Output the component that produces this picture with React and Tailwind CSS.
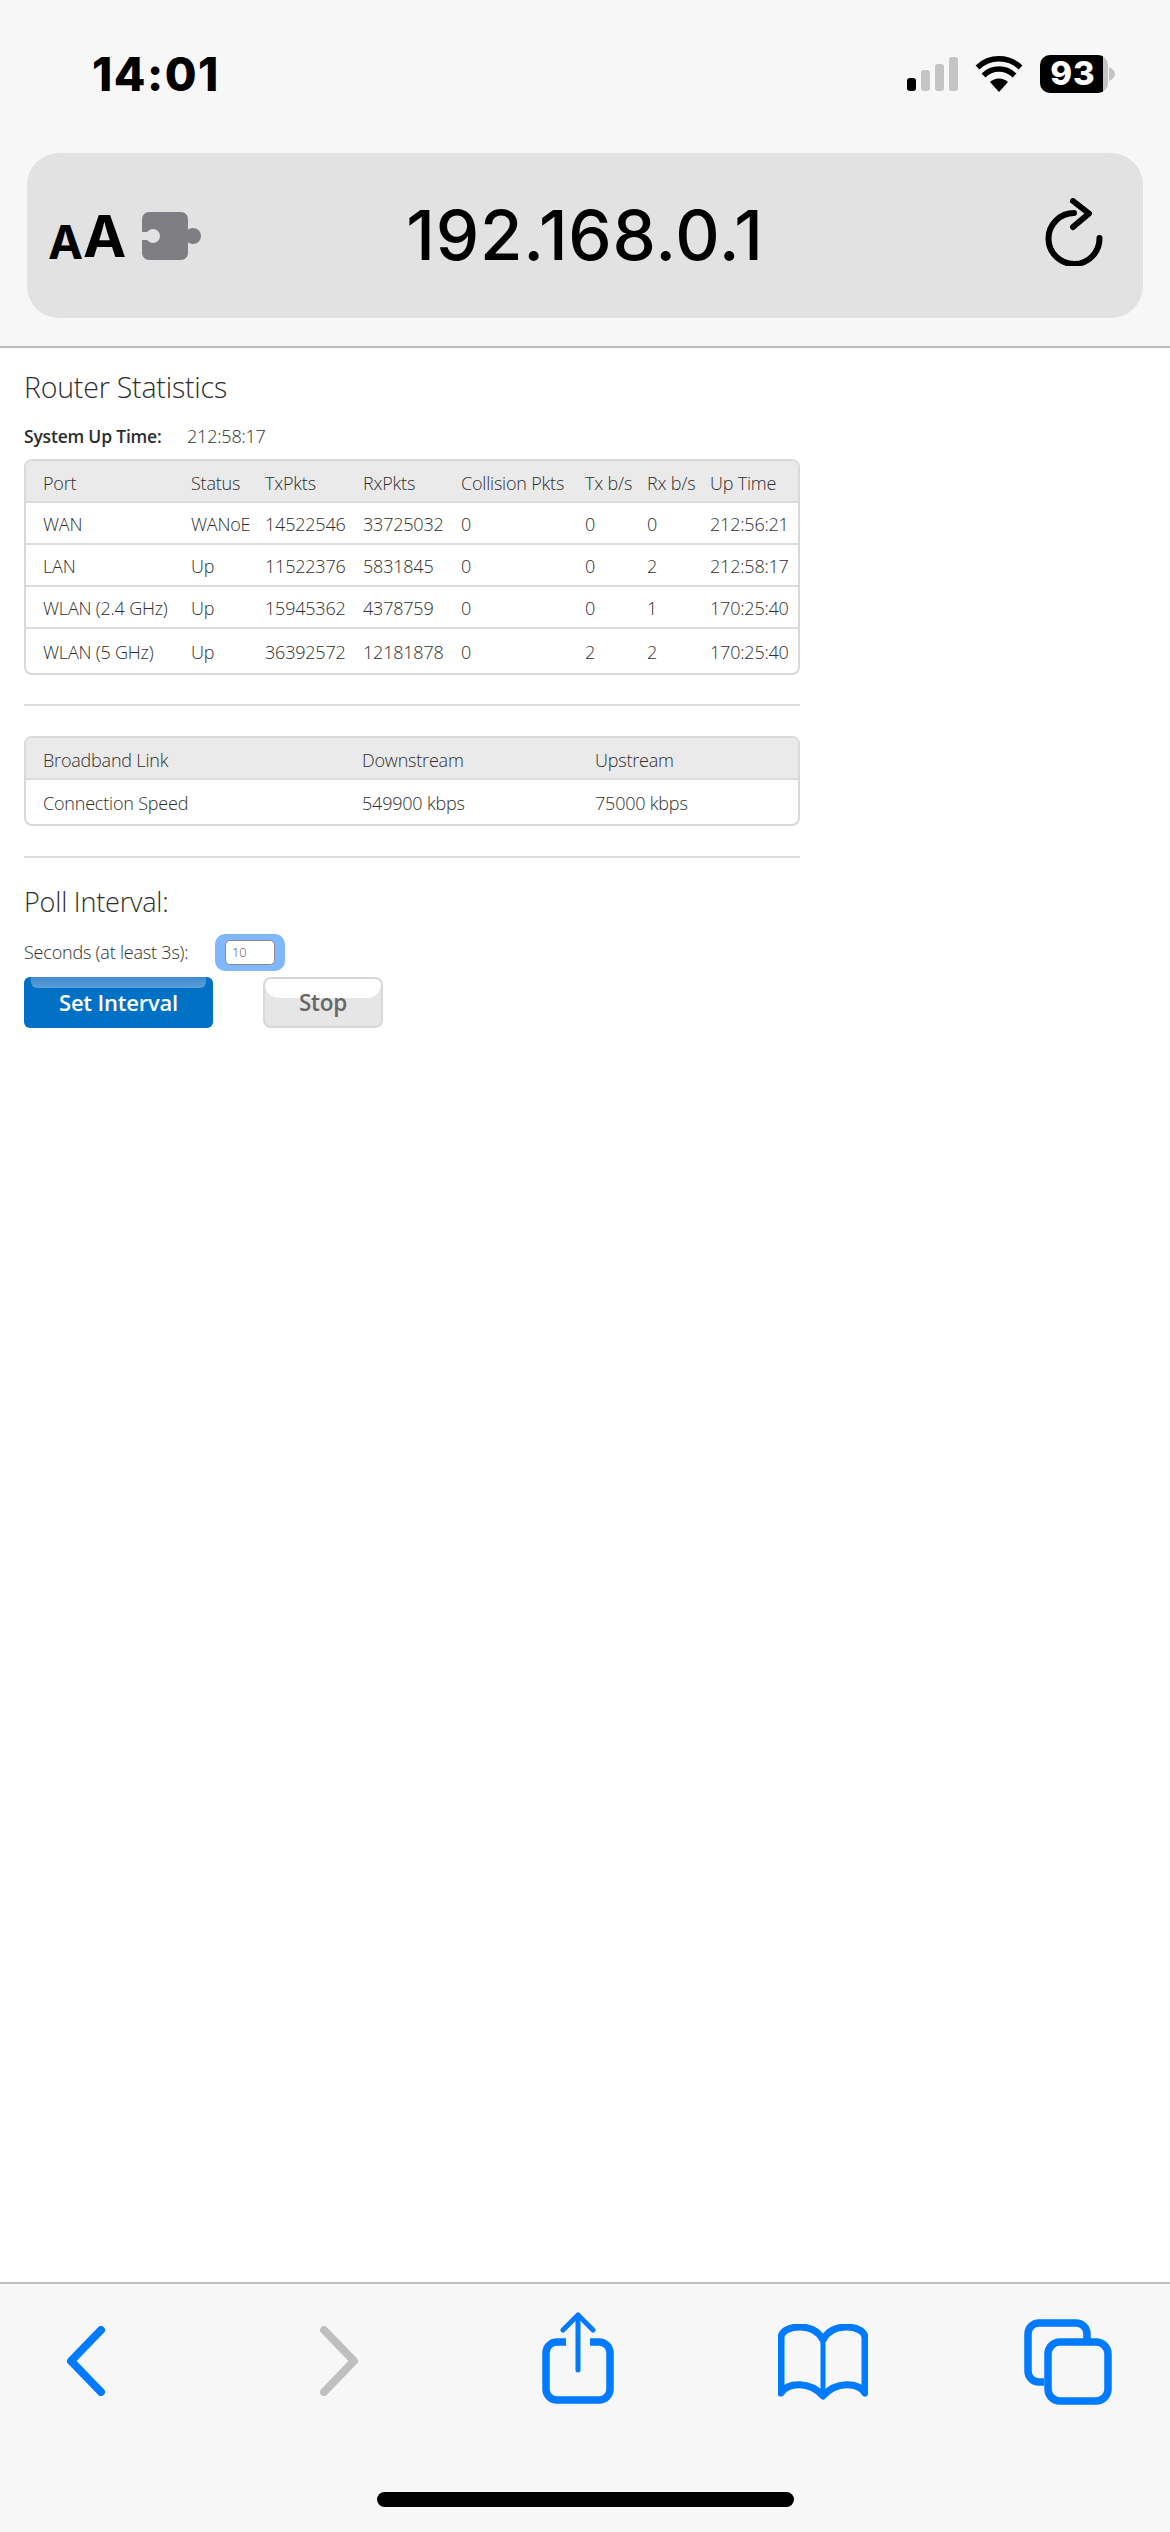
import React from 'react';

const stats = [
  ['WAN', 'WANoE', '14522546', '33725032', '0', '0', '0', '212:56:21'],
  ['LAN', 'Up', '11522376', '5831845', '0', '0', '2', '212:58:17'],
  ['WLAN (2.4 GHz)', 'Up', '15945362', '4378759', '0', '0', '1', '170:25:40'],
  ['WLAN (5 GHz)', 'Up', '36392572', '12181878', '0', '2', '2', '170:25:40'],
];
const statHeads = ['Port', 'Status', 'TxPkts', 'RxPkts', 'Collision Pkts', 'Tx b/s', 'Rx b/s', 'Up Time'];
const statWidths = ['w-[160px]', 'w-[74px]', 'w-[98px]', 'w-[98px]', 'w-[124px]', 'w-[62px]', 'w-[63px]', 'w-[97px]'];

function DataTable({ heads, rows, widths }) {
  return (
    <div className="w-[776px] overflow-hidden rounded-[8px] border-2 border-[#d9d9d9]">
      <table className="w-full table-fixed border-collapse">
        <colgroup>
          {widths.map((w, i) => <col key={i} className={w} />)}
        </colgroup>
        <thead>
          <tr className="h-[41px] bg-[#eaeaea]">
            {heads.map((h, i) => (
              <th key={h} className={`${i === 0 ? 'pl-[17px]' : 'pl-[5px]'} whitespace-nowrap border-b-2 border-[#dcdcdc] pt-[4px] text-left font-light`}>{h}</th>
            ))}
          </tr>
        </thead>
        <tbody>
          {rows.map((row, r) => {
            const last = r === rows.length - 1;
            return (
              <tr key={r} className={last ? 'h-[45px]' : 'h-[42px]'}>
                {row.map((c, i) => (
                  <td key={i} className={`${i === 0 ? 'pl-[17px]' : 'pl-[5px]'} whitespace-nowrap pt-[2px] ${last ? '' : 'border-b-2 border-[#dedede]'}`}>{c}</td>
                ))}
              </tr>
            );
          })}
        </tbody>
      </table>
    </div>
  );
}

function StatusIcons() {
  return (
    <div className="flex items-center">
      <div className="flex items-end gap-[5px]">
        <span className="h-[13px] w-[9px] rounded-[3px] bg-black" />
        <span className="h-[21px] w-[9px] rounded-[3px] bg-[#c4c4c4]" />
        <span className="h-[27px] w-[9px] rounded-[3px] bg-[#c4c4c4]" />
        <span className="h-[34px] w-[9px] rounded-[3px] bg-[#c4c4c4]" />
      </div>
      <svg className="ml-[17px]" width="48" height="36" viewBox="0 0 48 36">
        <path d="M24 36 L15 26 A13 13 0 0 1 33 26 Z" fill="#000" />
        <path d="M8.5 19.5 A22 22 0 0 1 39.5 19.5" fill="none" stroke="#000" strokeWidth="5.5" />
        <path d="M2.5 11.5 A31 31 0 0 1 45.5 11.5" fill="none" stroke="#000" strokeWidth="5.5" />
      </svg>
      <div className="relative ml-[17px] h-[38px] w-[68px] overflow-hidden rounded-[10px] bg-[#c4c4c4]">
        <div className="h-full w-[63px] bg-black" />
        <span className="absolute inset-0 flex items-center justify-center pr-[2px] font-['Inter',sans-serif] text-[33px] font-extrabold leading-none tracking-[1px] text-white">93</span>
      </div>
      <svg className="ml-[1px]" width="6" height="14" viewBox="0 0 6 14">
        <path d="M0 0 C4 2 6 4.5 6 7 C6 9.5 4 12 0 14 Z" fill="#c4c4c4" />
      </svg>
    </div>
  );
}

function Puzzle() {
  return (
    <svg width="59" height="48" viewBox="0 0 59 48">
      <rect x="0" y="0" width="46" height="48" rx="7" fill="#7f7f83" />
      <circle cx="51" cy="24" r="8" fill="#7f7f83" />
      <rect x="0" y="20" width="9" height="8" fill="#e2e2e2" />
      <circle cx="11" cy="24" r="7" fill="#e2e2e2" />
    </svg>
  );
}

function Reload() {
  return (
    <svg width="58" height="68" viewBox="0 0 58 68" fill="none" stroke="#000" strokeWidth="6" strokeLinecap="round" strokeLinejoin="round">
      <path d="M29 15 A25.5 25.5 0 1 0 54.5 40" />
      <path d="M28 3 L44 15.5 L28 29" />
    </svg>
  );
}

export default function App() {
  return (
    <div className="flex h-[2532px] w-[1170px] flex-col overflow-hidden bg-white font-['Open_Sans','Lato',sans-serif] text-[18px] font-light tracking-[-0.2px] text-[#2e2e2e]">
      <header className="h-[348px] shrink-0 border-b-2 border-[#b9b9b9] bg-[#f7f7f7] tracking-normal">
        <div className="flex h-[153px] items-center justify-between pb-[6px] pl-[92px] pr-[55px]">
          <span className="font-['Inter',sans-serif] text-[46px] font-extrabold leading-none tracking-[1.5px] text-black">14:01</span>
          <StatusIcons />
        </div>
        <div className="mx-[27px] grid h-[165px] grid-cols-[1fr_auto_1fr] items-center rounded-[32px] bg-[#e2e2e2] px-[21px]">
          <div className="flex items-center text-black">
            <div className="flex items-end font-['Inter',sans-serif] font-bold leading-none">
              <span className="text-[47px]">A</span>
              <span className="text-[58px]">A</span>
            </div>
            <div className="ml-[16px]"><Puzzle /></div>
          </div>
          <span className="font-['Inter',sans-serif] text-[69px] font-medium leading-none tracking-[0.8px] text-black">192.168.0.1</span>
          <div className="flex justify-end pb-[8px] pr-[19px]"><Reload /></div>
        </div>
      </header>

      <main className="flex-1 pl-[24px]">
        <h1 className="mt-[22px] text-[28.5px] font-light leading-[34px]">Router Statistics</h1>
        <div className="mt-[20px] flex h-[24px] items-center">
          <span className="w-[163px] text-[17.5px] font-semibold">System Up Time:</span>
          <span>212:58:17</span>
        </div>
        <div className="mt-[11px]">
          <DataTable heads={statHeads} rows={stats} widths={statWidths} />
        </div>
        <hr className="mt-[29px] w-[776px] border-t-2 border-[#dcdcdc]" />
        <div className="mt-[30px]">
          <DataTable
            heads={['Broadband Link', 'Downstream', 'Upstream']}
            rows={[['Connection Speed', '549900 kbps', '75000 kbps']]}
            widths={['w-[331px]', 'w-[233px]', 'w-[212px]']}
          />
        </div>
        <hr className="mt-[30px] w-[776px] border-t-2 border-[#dcdcdc]" />
        <h2 className="mt-[27px] text-[27px] font-light leading-[34px]">Poll Interval:</h2>
        <div className="mt-[15px] flex items-center">
          <span className="w-[191px]">Seconds (at least 3s):</span>
          <div className="rounded-[10px] bg-[#80b7ff] px-[10px] py-[6px]">
            <div className="flex h-[25px] w-[50px] items-center rounded-[5px] border border-[#8c8c8c] bg-white pl-[6px] text-[13px] leading-none text-[#555]">10</div>
          </div>
        </div>
        <div className="mt-[6px] flex">
          <button className="relative h-[51px] w-[189px] overflow-hidden rounded-[6px] bg-[#0171c5] text-[22px] font-semibold text-white">
            <span className="absolute left-[7px] right-[7px] top-0 h-[11px] rounded-b-[6px] bg-gradient-to-b from-[#3e8bd0] to-[#5c9dd8]" />
            <span className="relative">Set Interval</span>
          </button>
          <button className="relative ml-[50px] h-[51px] w-[120px] overflow-hidden rounded-[8px] border-2 border-[#d8d8d8] bg-[#e6e6e6] text-[22.5px] font-semibold text-[#666]">
            <span className="absolute left-0 right-0 top-0 h-[19px] rounded-b-[14px] bg-white" />
            <span className="relative">Stop</span>
          </button>
        </div>
      </main>

      <footer className="h-[250px] shrink-0 border-t-2 border-[#bdbdbd] bg-[#f7f7f7]">
        <div className="flex h-[208px] items-start">
          <svg className="ml-[66px] mt-[42px]" width="40" height="70" viewBox="0 0 40 70" fill="none" stroke="#007aff" strokeWidth="8" strokeLinecap="round" strokeLinejoin="round">
            <path d="M35 4 L5 35 L35 66" />
          </svg>
          <svg className="ml-[213px] mt-[42px]" width="40" height="70" viewBox="0 0 40 70" fill="none" stroke="#bfbfbf" strokeWidth="8" strokeLinecap="round" strokeLinejoin="round">
            <path d="M5 4 L35 35 L5 66" />
          </svg>
          <svg className="ml-[183px] mt-[28px]" width="72" height="92" viewBox="0 0 72 92" fill="none" stroke="#007aff" strokeLinecap="round" strokeLinejoin="round">
            <path d="M24 30 H15 a11 11 0 0 0 -11 11 V77 a11 11 0 0 0 11 11 H57 a11 11 0 0 0 11 -11 V41 a11 11 0 0 0 -11 -11 H48" strokeWidth="7.5" strokeLinecap="butt" />
            <path d="M36 4 V58" strokeWidth="5" />
            <path d="M21 18 L36 3 L51 18" strokeWidth="5" />
          </svg>
          <svg className="ml-[164px] mt-[40px]" width="90" height="76" viewBox="0 0 90 76" fill="none" stroke="#007aff" strokeWidth="7" strokeLinecap="round" strokeLinejoin="round">
            <path d="M45 16 C40 6 30 3 22 3 C12 3 3 7 3 14 V69 C10 58 32 57 45 72 C58 57 80 58 87 69 V14 C87 7 78 3 68 3 C60 3 50 6 45 16 Z" />
            <path d="M45 16 V72" strokeWidth="5" />
          </svg>
          <svg className="ml-[156px] mt-[35px]" width="88" height="86" viewBox="0 0 88 86" fill="none" stroke="#007aff" strokeWidth="7.5">
            <path d="M20 63 H15 a11 11 0 0 1 -11 -11 V15 a11 11 0 0 1 11 -11 H52 a11 11 0 0 1 11 11 V20" />
            <rect x="24" y="23" width="60" height="59" rx="12" />
          </svg>
        </div>
        <div className="mx-auto h-[15px] w-[417px] rounded-full bg-black" />
      </footer>
    </div>
  );
}
